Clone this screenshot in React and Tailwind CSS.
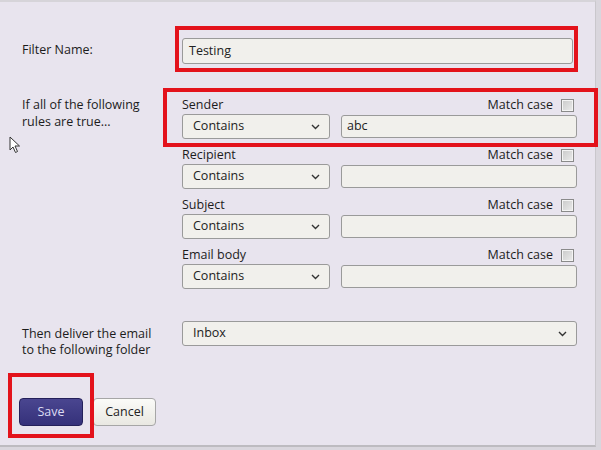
import { useState } from "react"

function Chevron({ className }) {
    return (
        <svg width="9" height="6" viewBox="0 0 9 6" className={className}>
            <path d="M1 1 L4.5 4.5 L8 1" fill="none" stroke="#333" strokeWidth="1.4" />
        </svg>
    )
}

function Select({ value, wide }) {
    return (
        <div
            className={`flex h-[25px] items-center justify-between rounded-[3px] border border-[#9a9a9a] bg-[#f1f0ec] pl-[10px] pr-[9px] ${
                wide ? "w-[395px]" : "w-[148px]"
            }`}
        >
            <span className="text-[#222]">{value}</span>
            <Chevron />
        </div>
    )
}

function TextBox({ value, className }) {
    return (
        <div
            className={`flex items-center rounded-[3px] border border-[#9a9a9a] bg-[#f1f0ec] px-[5px] text-[#222] ${className}`}
        >
            {value}
        </div>
    )
}

function Checkbox() {
    return (
        <span className="inline-block h-[13px] w-[13px] border border-[#8a8a8a] bg-gradient-to-br from-[#c9c9c9] to-[#ececec] shadow-[inset_0_0_0_1px_#f4f4f4]" />
    )
}

function Rule({ label, text }) {
    return (
        <div className="flex w-[395px] flex-col">
            <div className="flex h-[18px] items-end justify-between">
                <span className="leading-[16px]">{label}</span>
                <span className="flex items-center gap-[8px] pr-[3px]">
                    <span className="leading-[16px]">Match case</span>
                    <Checkbox />
                </span>
            </div>
            <div className="mt-[1px] flex items-center gap-[11px]">
                <Select value="Contains" />
                <TextBox value={text} className="h-[23px] flex-1" />
            </div>
        </div>
    )
}

export default function App() {
    const [rules] = useState([
        { label: "Sender", text: "abc" },
        { label: "Recipient", text: "" },
        { label: "Subject", text: "" },
        { label: "Email body", text: "" },
    ])

    return (
        <div
            className="relative h-[450px] w-[601px] overflow-hidden bg-[#d9d6dd] text-[12.5px] text-[#1c1c1c]"
            style={{ fontFamily: "'Open Sans', 'Noto Sans', sans-serif" }}
        >
            <div className="h-[447px] w-[596px] border-r border-t-2 border-b-2 border-r-[#c9c7cc] border-t-[#d6d4d9] border-b-[#bdbbc0] bg-[#e8e4ee] pl-[22px] pt-[36px]">
                <div className="flex">
                    <div className="w-[160px] pt-[3px] leading-[17px]">Filter Name:</div>
                    <TextBox value="Testing" className="h-[26px] w-[391px] pl-[6px]" />
                </div>

                <div className="mt-[31px] flex">
                    <div className="w-[160px] pt-[1px] leading-[17px]">
                        If all of the following
                        <br />
                        rules are true...
                    </div>
                    <div className="flex flex-col gap-[6px]">
                        {rules.map((r) => (
                            <Rule key={r.label} label={r.label} text={r.text} />
                        ))}
                    </div>
                </div>

                <div className="mt-[32px] flex items-start">
                    <div className="w-[160px] pt-[5px] leading-[16px]">
                        Then deliver the email
                        <br />
                        to the following folder
                    </div>
                    <Select value="Inbox" wide />
                </div>

                <div className="ml-[-3px] mt-[40px] flex gap-[10px]">
                    <button className="h-[28px] w-[64px] rounded-[4px] border border-[#24205a] bg-gradient-to-b from-[#4a4690] to-[#35317a] text-[#dcdcf2]">
                        Save
                    </button>
                    <button className="h-[28px] w-[63px] rounded-[4px] border border-[#a6a6a6] bg-gradient-to-b from-[#fbfbf8] to-[#e9e8e2] text-[#222]">
                        Cancel
                    </button>
                </div>
            </div>

            {/* red highlight annotations */}
            <div className="absolute left-[175px] top-[26px] h-[46px] w-[403px] border-[4px] border-[#e3121b]" />
            <div className="absolute left-[163px] top-[88px] h-[59px] w-[435px] border-[4px] border-[#e3121b]" />
            <div className="absolute left-[8px] top-[373px] h-[65px] w-[86px] border-[4px] border-[#e3121b]" />

            {/* mouse pointer */}
            <svg className="absolute left-[9px] top-[136px]" width="12" height="18" viewBox="0 0 12 18">
                <path d="M1 1 L1 14 L4 11 L6.5 16.5 L8.5 15.5 L6 10 L10.5 10 Z" fill="#fff" stroke="#333" strokeWidth="1" />
            </svg>
        </div>
    )
}
